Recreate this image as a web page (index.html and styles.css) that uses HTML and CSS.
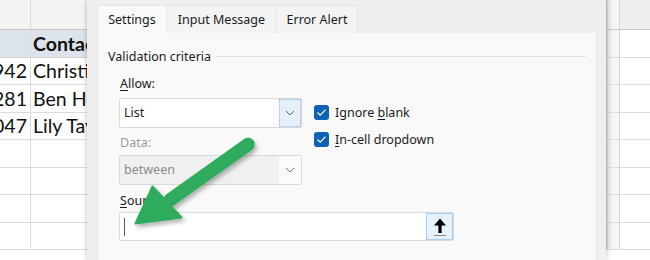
FILE: index.html
```html
<!DOCTYPE html>
<html lang="en">
<head>
<meta charset="utf-8">
<title>Data Validation</title>
<link rel="stylesheet" href="styles.css">
</head>
<body>
<div class="screen">
  <div class="sheet sheet-left">
    <div class="colhead"><div class="hc a"></div><div class="hc b"></div></div>
    <div class="row hdr"><div class="c a"></div><div class="c b bold">Contact</div></div>
    <div class="row"><div class="c a num"><span>10942</span></div><div class="c b">Christina</div></div>
    <div class="row"><div class="c a num"><span>10281</span></div><div class="c b">Ben Howard</div></div>
    <div class="row"><div class="c a num"><span>10047</span></div><div class="c b">Lily Taylor</div></div>
    <div class="row"><div class="c a"></div><div class="c b"></div></div>
    <div class="row"><div class="c a"></div><div class="c b"></div></div>
    <div class="row"><div class="c a"></div><div class="c b"></div></div>
    <div class="row"><div class="c a"></div><div class="c b"></div></div>
  </div>

  <div class="dialog">
    <div class="tabs">
      <div class="tab active t1">Settings</div>
      <div class="tab t2">Input Message</div>
      <div class="tab t3">Error Alert</div>
    </div>
    <div class="panel">
      <div class="group-head"><span>Validation criteria</span><span class="rule"></span></div>
      <div class="criteria">
        <div class="left-col">
          <div class="label lbl-allow"><u>A</u>llow:</div>
          <div class="combo">
            <span class="combo-text">List</span>
            <span class="combo-btn focus">
              <svg width="10" height="6" viewBox="0 0 10 6"><polyline points="1,1 5,5 9,1" fill="none" stroke="#606060" stroke-width="1"/></svg>
            </span>
          </div>
          <div class="label lbl-data disabled">Data:</div>
          <div class="combo combo-disabled">
            <span class="combo-text">between</span>
            <span class="combo-btn plain">
              <svg width="10" height="6" viewBox="0 0 10 6"><polyline points="1,1 5,5 9,1" fill="none" stroke="#7a7a7a" stroke-width="1"/></svg>
            </span>
          </div>
        </div>
        <div class="checks">
          <div class="check"><span class="box"><svg width="11" height="9" viewBox="0 0 11 9"><polyline points="1.5,4.5 4.2,7.2 9.5,1.6" fill="none" stroke="#ffffff" stroke-width="1.2"/></svg></span><span>Ignore <u>b</u>lank</span></div>
          <div class="check"><span class="box"><svg width="11" height="9" viewBox="0 0 11 9"><polyline points="1.5,4.5 4.2,7.2 9.5,1.6" fill="none" stroke="#ffffff" stroke-width="1.2"/></svg></span><span><u>I</u>n-cell dropdown</span></div>
        </div>
      </div>
      <div class="label lbl-source"><u>S</u>ource:</div>
      <div class="source">
        <span class="caret"></span>
        <span class="src-btn">
          <svg width="16" height="20" viewBox="0 0 16 20">
            <path d="M8 1.5 L14 8.5 L9.6 8.5 L9.6 16 L6.4 16 L6.4 8.5 L2 8.5 Z" fill="#000"/>
            <line x1="2" y1="18.5" x2="14" y2="18.5" stroke="#8a8a8a" stroke-width="1"/>
          </svg>
        </span>
      </div>
    </div>
  </div>

  <div class="sheet sheet-right">
    <div class="colhead"><div class="hc r1"></div><div class="hc r2"></div></div>
    <div class="row"><div class="c r1"></div><div class="c r2"></div></div>
    <div class="row"><div class="c r1"></div><div class="c r2"></div></div>
    <div class="row"><div class="c r1"></div><div class="c r2"></div></div>
    <div class="row"><div class="c r1"></div><div class="c r2"></div></div>
    <div class="row"><div class="c r1"></div><div class="c r2"></div></div>
    <div class="row"><div class="c r1"></div><div class="c r2"></div></div>
    <div class="row"><div class="c r1"></div><div class="c r2"></div></div>
    <div class="row"><div class="c r1"></div><div class="c r2"></div></div>
  </div>

  <svg class="annot" width="650" height="260" viewBox="0 0 650 260">
    <defs>
      <filter id="sh" x="-20%" y="-20%" width="140%" height="140%">
        <feDropShadow dx="2" dy="3" stdDeviation="2" flood-color="#000" flood-opacity="0.3"/>
      </filter>
    </defs>
    <g filter="url(#sh)">
      <line x1="248" y1="144.5" x2="170" y2="200" stroke="#2fab5c" stroke-width="13.5" stroke-linecap="round"/>
      <polygon points="135.5,223.5 152.5,186.5 181.5,217.5" fill="#2fab5c" stroke="#2fab5c" stroke-width="2" stroke-linejoin="round"/>
    </g>
  </svg>
</div>
</body>
</html>
```

FILE: styles.css
```css
html, body {
  margin: 0;
  padding: 0;
}
body {
  width: 650px;
  height: 260px;
  overflow: hidden;
  background: #ffffff;
}
.screen {
  position: relative;
  display: flex;
  width: 650px;
  height: 260px;
  overflow: hidden;
}

/* spreadsheet */
.sheet {
  font-family: Lato, "Liberation Sans", sans-serif;
  font-size: 19.5px;
  color: #111;
  overflow: hidden;
  flex: none;
}
.sheet-left { width: 87px; }
.sheet-right { flex: 1; }
.colhead {
  display: flex;
  height: 30px;
  box-sizing: border-box;
  background: #f3f3f3;
  border-bottom: 1px solid #c9c9c9;
}
.hc { height: 100%; box-sizing: border-box; }
.row {
  display: flex;
  height: 27.5px;
  box-sizing: border-box;
  border-bottom: 1px solid #dcdcdc;
}
.row.hdr { background: #dde3ea; border-bottom-color: #cfd4da; }
.c {
  box-sizing: border-box;
  height: 100%;
  display: flex;
  align-items: center;
  white-space: nowrap;
  overflow: hidden;
}
.a { width: 31px; border-right: 1px solid #dcdcdc; flex: none; }
.b { flex: 1; padding-left: 2px; }
.num { justify-content: flex-end; padding-right: 3px; }
.num span { flex: none; }
.bold { font-weight: 700; }
.sheet-right .r1 {
  width: 14px;
  flex: none;
  border-right: 1px solid #d6d6d6;
  background: linear-gradient(to right, #c4c4c4 0, #e6e6e6 2px, #f2f2f2 6px, #f7f7f7 100%);
}
.sheet-right .r2 { flex: 1; }
.sheet-right .colhead { background: #eeeeee; }

/* dialog */
.dialog {
  flex: none;
  width: 519px;
  height: 260px;
  box-sizing: border-box;
  padding: 5px 9px 0 10px;
  background: #efefef;
  box-shadow: 0 0 5px rgba(0, 0, 0, 0.28);
  position: relative;
  z-index: 1;
  font-family: "Noto Sans", "Open Sans", sans-serif;
  font-size: 12.5px;
  color: #1b1b1b;
  display: flex;
  flex-direction: column;
}
.tabs {
  display: flex;
  height: 28px;
  flex: none;
}
.tab {
  box-sizing: border-box;
  height: 28px;
  line-height: 27px;
  text-align: center;
  background: #f3f3f3;
  border: 1px solid #e6e6e6;
  border-bottom: none;
  border-left: none;
}
.tab.active { background: #f9f9f9; border-left: 1px solid #e6e6e6; }
.t1 { width: 70px; }
.t2 { width: 110px; }
.t3 { width: 81px; }

.panel {
  flex: 1;
  background: #f9f9f9;
  border: 1px solid #e6e6e6;
  border-bottom: none;
  border-top: none;
  padding: 15px 10px 0 10px;
}
.group-head {
  display: flex;
  align-items: center;
  height: 18px;
  line-height: 18px;
}
.group-head .rule {
  flex: 1;
  height: 1px;
  background: #e2e2e2;
  margin-left: 5px;
  margin-top: -2px;
}
.criteria {
  display: flex;
  padding-left: 11px;
  margin-top: 9px;
}
.left-col { width: 183px; flex: none; }
.label {
  height: 18px;
  line-height: 18px;
  padding-left: 1px;
}
.label u { text-decoration-thickness: 1px; text-underline-offset: 2px; }
.disabled { color: #9d9d9d; }
.lbl-allow { margin-bottom: 5px; }
.lbl-data { margin-top: 6px; margin-bottom: 3px; }
.combo {
  position: relative;
  display: flex;
  height: 30px;
  box-sizing: border-box;
  border: 1px solid #dadada;
  border-radius: 2px;
  background: #ffffff;
  align-items: stretch;
}
.combo-text {
  flex: 1;
  padding-left: 4px;
  line-height: 28px;
}
.combo-disabled { background: #f0f0f0; }
.combo-disabled .combo-text { color: #8c8c8c; }
.combo-btn {
  width: 22px;
  flex: none;
  display: flex;
  align-items: center;
  justify-content: center;
  box-sizing: border-box;
}
.combo-btn.focus {
  background: #e3effa;
  border: 1px dotted #8fb8dc;
}
.combo-btn.plain { background: #fbfbfb; }

.checks {
  margin-left: 12px;
  margin-top: 24px;
}
.check {
  display: flex;
  align-items: center;
  height: 27px;
}
.check u { text-decoration-thickness: 1px; text-underline-offset: 2px; }
.box {
  width: 15px;
  height: 15px;
  box-sizing: border-box;
  border-radius: 3px;
  background: #0f61b5;
  margin-right: 6px;
  display: flex;
  align-items: center;
  justify-content: center;
}

.lbl-source { margin-left: 11px; margin-top: 7px; margin-bottom: 2px; }
.source {
  margin-left: 11px;
  width: 335px;
  height: 29px;
  box-sizing: border-box;
  border: 1px solid #dadada;
  border-radius: 2px;
  background: #fff;
  display: flex;
  align-items: center;
  justify-content: space-between;
}
.caret {
  width: 1px;
  height: 18px;
  background: #555;
  margin-left: 4px;
}
.src-btn {
  width: 27px;
  height: 27px;
  box-sizing: border-box;
  background: #e5f1fb;
  border: 1px solid #a9cdec;
  display: flex;
  align-items: center;
  justify-content: center;
}

.annot {
  position: absolute;
  left: 0;
  top: 0;
  z-index: 5;
  pointer-events: none;
}
```
